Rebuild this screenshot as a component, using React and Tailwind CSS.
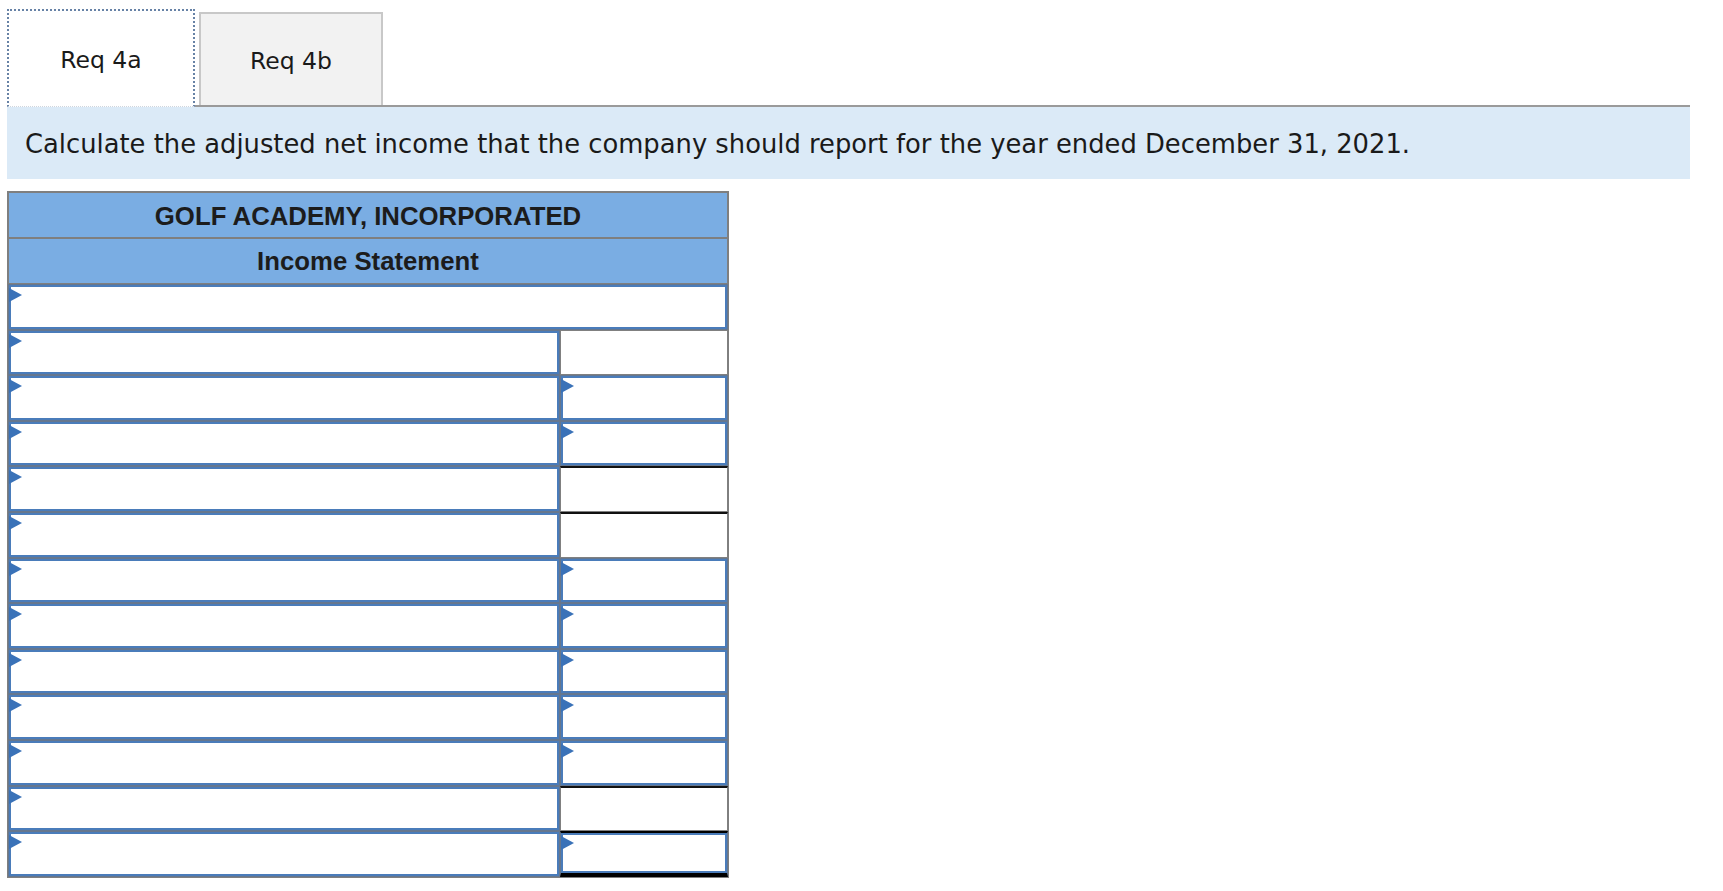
import React from "react";

// right column cell kinds, rows 2..13
const rightCells = [
  "plain",
  "input",
  "input",
  "total",
  "total",
  "input",
  "input",
  "input",
  "input",
  "input",
  "total",
  "grand",
];

const Marker = () => (
  <svg
    className="absolute left-[-2px] top-[1px]"
    width="13"
    height="14"
    viewBox="0 0 13 14"
  >
    <polygon points="0,0 13,7 0,14" fill="#3a72b8" />
  </svg>
);

const InputCell = ({ className = "" }) => (
  <div className={`h-full border border-[#66778e] ${className}`}>
    <div className="relative h-full border-2 border-[#4a7cba] bg-white">
      <Marker />
    </div>
  </div>
);

const RightCell = ({ kind }) => {
  if (kind === "input") return <InputCell className="w-[168px]" />;
  if (kind === "grand")
    return (
      <InputCell className="w-[168px] border-t-2 border-t-black border-b-4 border-b-black" />
    );
  if (kind === "total")
    return (
      <div className="h-full w-[168px] border border-[#808080] border-t-2 border-t-[#111] bg-white" />
    );
  return <div className="h-full w-[168px] border border-[#808080] bg-white" />;
};

const App = () => {
  return (
    <div
      className="min-h-[891px] bg-white pl-[7px] pt-[9px] text-[#1a1a1a]"
      style={{ fontFamily: '"DejaVu Sans", Verdana, sans-serif' }}
    >
      <div className="w-[1683px]">
        {/* Tabs */}
        <div className="flex h-[98px] items-end">
          <div className="flex h-[98px] w-[188px] items-center justify-center border-2 border-b border-dotted border-[#6782a6] border-b-[#cfd6df] bg-white pt-[4px] text-[23.5px]">
            Req 4a
          </div>
          <div className="flex h-[98px] flex-1 items-end border-b-2 border-[#9a9a9a] pl-[4px]">
            <div className="flex h-[93px] w-[184px] items-center justify-center border-2 border-b-0 border-[#c8c8c8] bg-[#f2f2f2] pt-[4px] text-[23.5px]">
              Req 4b
            </div>
          </div>
        </div>

        {/* Instruction */}
        <div className="flex h-[72px] items-center bg-[#dbeaf7] pl-[18px] pt-[2px] text-[25.8px]">
          Calculate the adjusted net income that the company should report for
          the year ended December 31, 2021.
        </div>
      </div>

      {/* Income statement */}
      <div className="mt-[12px] w-[722px] border border-[#7f7f7f]">
        <div
          className="text-[25.75px] font-bold text-[#1c1c1c]"
          style={{ fontFamily: '"Liberation Sans", Arial, sans-serif' }}
        >
          <div className="flex h-[46px] items-center justify-center border border-[#7f7f7f] bg-[#7aade3] pt-[3px]">
            GOLF ACADEMY, INCORPORATED
          </div>
          <div className="flex h-[46px] items-center justify-center border border-[#7f7f7f] bg-[#7aade3]">
            Income Statement
          </div>
        </div>

        <div className="h-[45.6px]">
          <InputCell />
        </div>
        {rightCells.map((kind, i) => (
          <div key={i} className="flex h-[45.6px]">
            <InputCell className="w-[552px]" />
            <RightCell kind={kind} />
          </div>
        ))}
      </div>
    </div>
  );
};

export default App;
